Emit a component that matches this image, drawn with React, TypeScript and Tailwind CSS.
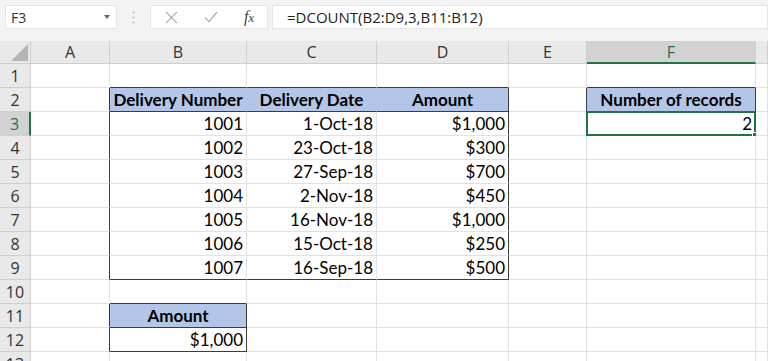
import React from "react";

type Spec = {
  text?: string;
  align?: "l" | "c" | "r";
  bold?: boolean;
  fill?: boolean;
  r: "g" | "d" | "f";
  b: "g" | "d";
  sel?: boolean;
};

const COLS = ["A", "B", "C", "D", "E", "F", "G"];

const data: Record<string, { text: string; align: "l" | "c" | "r"; bold?: boolean; fill?: boolean }> = {
  B2: { text: "Delivery Number", align: "c", bold: true, fill: true },
  C2: { text: "Delivery Date", align: "c", bold: true, fill: true },
  D2: { text: "Amount", align: "c", bold: true, fill: true },
  F2: { text: "Number of records", align: "c", bold: true, fill: true },
  F3: { text: "2", align: "r" },
  B11: { text: "Amount", align: "c", bold: true, fill: true },
  B12: { text: "$1,000", align: "r" },
};

const rowsData = [
  ["1001", "1-Oct-18", "$1,000"],
  ["1002", "23-Oct-18", "$300"],
  ["1003", "27-Sep-18", "$700"],
  ["1004", "2-Nov-18", "$450"],
  ["1005", "16-Nov-18", "$1,000"],
  ["1006", "15-Oct-18", "$250"],
  ["1007", "16-Sep-18", "$500"],
];
rowsData.forEach((r, i) => {
  const row = i + 3;
  data["B" + row] = { text: r[0], align: "r" };
  data["C" + row] = { text: r[1], align: "r" };
  data["D" + row] = { text: r[2], align: "r" };
});

function spec(row: number, col: string): Spec {
  const d = data[col + row];
  let r: Spec["r"] = "g";
  let b: Spec["b"] = "g";
  if (col === "A" && row >= 2 && row <= 9) r = "d";
  if (col === "D" && row >= 2 && row <= 9) r = "d";
  if ((col === "E" || col === "F") && row === 2) r = "d";
  if ((col === "A" || col === "B") && (row === 11 || row === 12)) r = "d";
  if ((col === "B" || col === "C") && row === 2) r = "f";
  if (["B", "C", "D"].includes(col) && (row === 1 || row === 2 || row === 9)) b = "d";
  if (col === "F" && (row === 1 || row === 2)) b = "d";
  if (col === "B" && (row === 10 || row === 11 || row === 12)) b = "d";
  return { ...(d || {}), r, b, sel: col === "F" && row === 3 };
}

const rightCls = {
  g: "border-r-[#e1e1e1]",
  d: "border-r-[#3c3c3c]",
  f: "border-r-[#b4c6e7]",
};
const bottomCls = {
  g: "border-b-[#e1e1e1]",
  d: "border-b-[#3c3c3c]",
};

function Cell({ s }: { s: Spec }) {
  const alignCls = s.align === "r" ? "justify-end pr-[3px]" : s.align === "c" ? "justify-center" : "justify-start pl-[3px]";
  return (
    <div
      className={`relative flex items-end pb-[1px] border-r border-b ${rightCls[s.r]} ${bottomCls[s.b]} ${
        s.fill ? "bg-[#b4c6e7]" : "bg-white"
      } ${alignCls} whitespace-nowrap overflow-visible`}
    >
      {s.text && (
        <span className={`leading-[20px] text-[17px] text-black ${s.bold ? "font-bold" : "font-normal"}`}>{s.text}</span>
      )}
      {s.sel && (
        <div className="absolute -top-px -left-px -right-px -bottom-px border-2 border-[#217346] pointer-events-none">
          <div className="absolute -right-[4px] -bottom-[4px] w-[6px] h-[6px] bg-[#217346] border border-white" />
        </div>
      )}
    </div>
  );
}

export default function App() {
  const rows = Array.from({ length: 13 }, (_, i) => i + 1);
  return (
    <div
      className="w-[768px] h-[361px] overflow-hidden bg-[#f3f3f3] flex flex-col"
      style={{ fontFamily: "Lato, 'Open Sans', sans-serif" }}
    >
      {/* formula bar */}
      <div className="h-[41px] flex items-start pt-[5px] gap-0 shrink-0">
        <div className="ml-[5px] w-[112px] h-[24px] bg-white border border-[#e6e6e6] flex items-center justify-between pl-[5px] pr-[6px]">
          <span className="text-[14px] text-[#333]" style={{ fontFamily: "'Open Sans', sans-serif" }}>F3</span>
          <svg width="6" height="4" viewBox="0 0 6 4"><path d="M0 0h6L3 4z" fill="#666" /></svg>
        </div>
        <div className="w-[33px] h-[24px] flex items-center justify-center">
          <svg width="3" height="13" viewBox="0 0 3 13">
            <circle cx="1.5" cy="1.5" r="1" fill="#b8b8b8" />
            <circle cx="1.5" cy="6.5" r="1" fill="#b8b8b8" />
            <circle cx="1.5" cy="11.5" r="1" fill="#b8b8b8" />
          </svg>
        </div>
        <div className="w-[118px] h-[24px] bg-white border border-[#e6e6e6] flex items-center">
          <div className="w-[40px] flex justify-center">
            <svg width="13" height="13" viewBox="0 0 13 13"><path d="M1 1L12 12M12 1L1 12" stroke="#b0b0b0" strokeWidth="1.2" /></svg>
          </div>
          <div className="w-[40px] flex justify-center">
            <svg width="14" height="12" viewBox="0 0 14 12"><path d="M1 6.5L5 10.5L13 1" stroke="#b0b0b0" strokeWidth="1.2" fill="none" /></svg>
          </div>
          <div className="w-[36px] flex justify-center">
            <span className="text-[16px] italic text-[#444]" style={{ fontFamily: "'Liberation Serif', serif" }}>
              f<span className="text-[13px]">x</span>
            </span>
          </div>
        </div>
        <div className="ml-[4px] flex-1 h-[24px] bg-white border border-[#e6e6e6] flex items-center pl-[14px]">
          <span className="text-[15px] text-[#222]" style={{ fontFamily: "'Open Sans', sans-serif" }}>
            =DCOUNT(B2:D9,3,B11:B12)
          </span>
        </div>
      </div>

      {/* grid */}
      <div
        className="grid"
        style={{
          gridTemplateColumns: "31px 79px 137px 130px 132px 78px 169px 12px",
          gridTemplateRows: "23px repeat(13, 24px)",
        }}
      >
        {/* corner */}
        <div className="bg-[#e9e9e9] border-r border-b border-[#cfcfcf] flex items-end justify-end pr-[2px] pb-[2px]">
          <svg width="17" height="17" viewBox="0 0 17 17"><path d="M17 0V17H0z" fill="#b5b5b5" /></svg>
        </div>
        {COLS.map((c) =>
          c === "F" ? (
            <div
              key={c}
              className="bg-[#d2d2d2] border-r border-r-[#cfcfcf] border-b-2 border-b-[#217346] flex items-center justify-center text-[16px] text-[#217346]"
              style={{ fontFamily: "'Open Sans', sans-serif" }}
            >
              {c}
            </div>
          ) : (
            <div
              key={c}
              className="bg-[#e9e9e9] border-r border-b border-[#cfcfcf] flex items-center justify-center text-[16px] text-[#333]"
              style={{ fontFamily: "'Open Sans', sans-serif" }}
            >
              {c === "G" ? "" : c}
            </div>
          )
        )}
        {rows.map((row) => (
          <React.Fragment key={row}>
            {row === 3 ? (
              <div
                className="bg-[#d2d2d2] border-r-2 border-r-[#217346] border-b border-b-[#cfcfcf] flex items-center justify-center text-[16px] text-[#217346]"
                style={{ fontFamily: "'Open Sans', sans-serif" }}
              >
                {row}
              </div>
            ) : (
              <div
                className="bg-[#e9e9e9] border-r border-b border-[#cfcfcf] flex items-center justify-center text-[16px] text-[#333]"
                style={{ fontFamily: "'Open Sans', sans-serif" }}
              >
                {row}
              </div>
            )}
            {COLS.map((c) => (
              <Cell key={c} s={spec(row, c)} />
            ))}
          </React.Fragment>
        ))}
      </div>
    </div>
  );
}
